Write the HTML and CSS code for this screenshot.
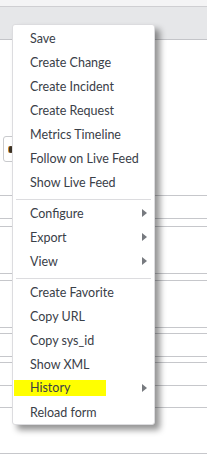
FILE: index.html
```html
<!DOCTYPE html>
<html>
<head>
<meta charset="utf-8">
<link rel="stylesheet" href="styles.css">
</head>
<body>
<div class="page">
  <div class="topbar"></div>
  <div class="header"></div>
  <div class="content">
    <div class="gap-top"></div>
    <div class="select"><span class="select-dot"></span></div>
    <div class="rule r33"></div>
    <div class="rule r22"></div>
    <div class="rule r7"></div>
    <div class="rule r46"></div>
    <div class="rule r6"></div>
    <div class="rule r46"></div>
    <div class="rule r5"></div>
    <div class="rule r22"></div>
    <div class="rule r5"></div>
    <div class="rule r22"></div>
    <div class="rule r21"></div>
    <div class="rule r45"></div>
  </div>

  <ul class="menu">
    <li class="item">Save</li>
    <li class="item">Create Change</li>
    <li class="item">Create Incident</li>
    <li class="item">Create Request</li>
    <li class="item">Metrics Timeline</li>
    <li class="item">Follow on Live Feed</li>
    <li class="item">Show Live Feed</li>
    <li class="divider"></li>
    <li class="item sub">Configure<span class="caret"></span></li>
    <li class="item sub">Export<span class="caret"></span></li>
    <li class="item sub">View<span class="caret"></span></li>
    <li class="divider"></li>
    <li class="item">Create Favorite</li>
    <li class="item">Copy URL</li>
    <li class="item">Copy sys_id</li>
    <li class="item">Show XML</li>
    <li class="item sub"><span class="mark">History</span><span class="caret"></span></li>
    <li class="item">Reload form</li>
  </ul>
</div>
</body>
</html>
```
FILE: styles.css
```css
* { box-sizing: border-box; }
html, body { margin: 0; padding: 0; background: #fff; }
body { font-family: Lato, "Liberation Sans", sans-serif; }

.page { position: relative; width: 207px; height: 474px; overflow: hidden; }

.topbar { height: 7px; background: #f4f4f5; border-bottom: 1px solid #cfcfd2; }
.header { height: 33px; background: #e6e7e9; border-bottom: 1px solid #c4c5c9; }

.content { display: flex; flex-direction: column; }
.gap-top { height: 96px; }
.select {
  height: 26px; margin-left: 3px; width: 80px;
  border: 1px solid #c9cacd; border-radius: 3px;
  display: flex; align-items: center; padding-left: 5px;
}
.select-dot { width: 4px; height: 7px; border-radius: 2px; background: #3b3226; box-shadow: -1px 0 0 #d08a2a; }

.rule { box-sizing: content-box; border-bottom: 1px solid #c6c7cb; }
.r33 { height: 33px; }
.r22 { height: 22px; }
.r21 { height: 21px; }
.r7 { height: 7px; }
.r6 { height: 6px; }
.r5 { height: 5px; }
.r46 { height: 46px; }
.r45 { height: 45px; }

.menu {
  position: absolute; left: 12px; top: 24px; width: 143px;
  margin: 0; padding: 1px 0 0; list-style: none;
  background: #fff; border: 1px solid #dcdcdf; border-radius: 3px;
  box-shadow: 5px 5px 6px rgba(0, 0, 0, 0.42);
}
.item {
  height: 24px; display: flex; align-items: center; justify-content: space-between;
  padding: 0 7px 0 17px;
  font-size: 12.5px; color: #3a4048; white-space: nowrap;
}
.divider { height: 1px; background: #dcdcdf; margin: 5px 3px 1px; }
.caret {
  width: 0; height: 0;
  border-left: 5px solid #777a7f;
  border-top: 4px solid transparent; border-bottom: 4px solid transparent;
}
.mark {
  display: inline-block; background: #ffff00;
  margin-left: -16px; padding-left: 16px; width: 92px; height: 16px; line-height: 16px;
}
```
